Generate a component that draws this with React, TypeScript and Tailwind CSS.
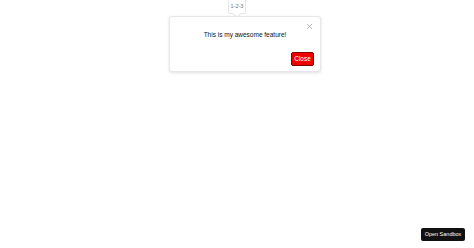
import { X } from "lucide-react";

export default function App() {
  return (
    <div className="relative h-[248px] w-[474px] overflow-hidden bg-white font-['Liberation_Sans',Arial,sans-serif]">
      {/* step badge */}
      <div className="absolute left-[228px] top-0 flex h-[14px] w-[18px] items-center justify-center rounded-b-[2px] border border-t-0 border-gray-200 bg-white text-[5.5px] text-gray-500">
        1-2-3
        <span className="absolute -bottom-[4px] left-1/2 h-[6px] w-[6px] -translate-x-1/2 rotate-45 border-b border-r border-gray-200 bg-white" />
      </div>

      {/* popover */}
      <div className="absolute left-[169px] top-[16px] flex h-[56px] w-[152px] flex-col rounded-[3px] border border-gray-200 bg-white px-[6px] pt-[5px] shadow-[0_1px_3px_rgba(0,0,0,0.12)]">
        <div className="flex justify-end">
          <X size={9} strokeWidth={1.3} className="text-gray-500" />
        </div>
        <p className="-mt-[1px] text-center text-[6.5px] leading-[9px] text-[#111]">This is my awesome feature!</p>
        <div className="mt-[13px] flex justify-end">
          <button className="h-[14px] w-[23px] rounded-[2px] border border-[#8a0000] bg-[#ee0000] text-[6.5px] text-white">
            Close
          </button>
        </div>
      </div>

      {/* sandbox button */}
      <button className="absolute bottom-[7px] right-[9px] h-[13px] w-[44px] rounded-[2px] bg-[#111] text-[5.5px] text-white">
        Open Sandbox
      </button>
    </div>
  );
}
